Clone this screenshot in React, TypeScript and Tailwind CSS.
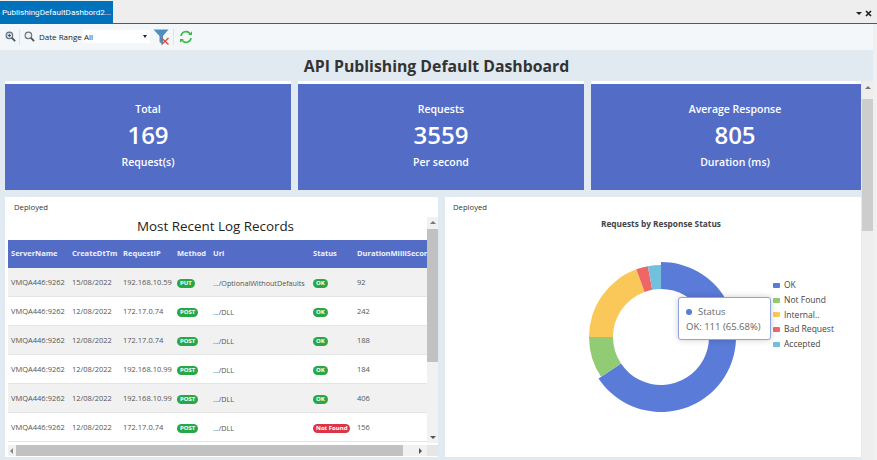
const rows = [
    { ip: '192.168.10.59', date: '15/08/2022', method: 'PUT', url: '.../OptionalWithoutDefaults', status: 'OK', ms: '92' },
    { ip: '172.17.0.74', date: '12/08/2022', method: 'POST', url: '.../DLL', status: 'OK', ms: '242' },
    { ip: '172.17.0.74', date: '12/08/2022', method: 'POST', url: '.../DLL', status: 'OK', ms: '188' },
    { ip: '192.168.10.99', date: '12/08/2022', method: 'POST', url: '.../DLL', status: 'OK', ms: '184' },
    { ip: '192.168.10.99', date: '12/08/2022', method: 'POST', url: '.../DLL', status: 'OK', ms: '406' },
    { ip: '172.17.0.74', date: '12/08/2022', method: 'POST', url: '.../DLL', status: 'Not Found', ms: '156' },
];

const legend = [
    { label: 'OK', color: 'bg-[#5b7bd8]' },
    { label: 'Not Found', color: 'bg-[#91cc75]' },
    { label: 'Internal..', color: 'bg-[#fac858]' },
    { label: 'Bad Request', color: 'bg-[#ee6666]' },
    { label: 'Accepted', color: 'bg-[#73c0de]' },
];

const cols = 'grid grid-cols-[61px_51px_54px_36px_100px_44px_70px] pl-[3px]';

function arc(cx: number, cy: number, r0: number, r1: number, from: number, to: number) {
    const p = (r: number, a: number) => {
        const t = (a * Math.PI) / 180;
        return `${(cx + r * Math.sin(t)).toFixed(2)} ${(cy - r * Math.cos(t)).toFixed(2)}`;
    };
    const large = to - from > 180 ? 1 : 0;
    return `M${p(r1, from)} A${r1} ${r1} 0 ${large} 1 ${p(r1, to)} L${p(r0, to)} A${r0} ${r0} 0 ${large} 0 ${p(r0, from)} Z`;
}

function Magnifier({ plus }: { plus?: boolean }) {
    return (
        <svg width="11" height="11" viewBox="0 0 12 12" fill="none">
            <circle cx="4.8" cy="4.8" r="3.6" fill={plus ? '#cfe3f5' : '#eef2f5'} stroke="#6a7278" strokeWidth="1.2" />
            <path d="M7.6 7.6 11 11" stroke="#4b5258" strokeWidth="2" />
            {plus ? <path d="M3 4.8h3.6M4.8 3v3.6" stroke="#2b5f96" strokeWidth="1.1" /> : null}
        </svg>
    );
}

function Card({ title, value, sub, className }: { title: string; value: string; sub: string; className: string }) {
    return (
        <div className={`flex h-[109px] flex-col border-t-[3px] border-white bg-[#536dc7] text-center text-white ${className}`}>
            <p className="mt-[17px] text-[10.5px] leading-[16px] font-semibold">{title}</p>
            <p className="mt-[2px] text-[24px] leading-[32px] font-semibold">{value}</p>
            <p className="mt-[3px] text-[10.5px] leading-[16px] font-semibold">{sub}</p>
        </div>
    );
}

function Pill({ text, red }: { text: string; red?: boolean }) {
    return (
        <span className={`block w-fit rounded-full px-[3px] text-[6px] leading-[9px] font-bold text-white ${red ? 'bg-[#dc3545]' : 'bg-[#28a745]'}`}>
            {text}
        </span>
    );
}

function Arrow({ dir, className = '' }: { dir: 'up' | 'down' | 'left' | 'right'; className?: string }) {
    const shape = {
        up: 'border-x-[3px] border-b-[3px] border-x-transparent border-b-[#777]',
        down: 'border-x-[3px] border-t-[3px] border-x-transparent border-t-[#555]',
        left: 'border-y-[3px] border-r-[3px] border-y-transparent border-r-[#888]',
        right: 'border-y-[3px] border-l-[3px] border-y-transparent border-l-[#555]',
    }[dir];
    return <span className={`block h-0 w-0 shrink-0 ${shape} ${className}`} />;
}

export default function App() {
    return (
        <div className="flex h-[460px] w-[877px] flex-col overflow-hidden bg-[#f0f0f0] font-['Open_Sans',sans-serif] text-[#333]">
            <div className="flex h-[24px] shrink-0 border-b border-[#0072bc] bg-[#eeeeee] pt-[1px]">
                <div className="flex w-[113px] items-center whitespace-nowrap bg-[#0072bc] pl-[2px] font-['Roboto',sans-serif] text-[8.1px] text-white">
                    PublishingDefaultDashbord2...
                </div>
                <div className="ml-auto flex items-center gap-[3px] pr-[5px] pt-[2px] text-[#222]">
                    <span className="h-0 w-0 border-x-[3px] border-t-[3px] border-x-transparent border-t-[#222]" />
                    <svg width="7" height="7" viewBox="0 0 7 7">
                        <path d="M1 1l5 5M6 1L1 6" stroke="#222" strokeWidth="1.7" />
                    </svg>
                </div>
            </div>

            <div className="flex h-[26px] w-[873px] shrink-0 items-center bg-[#f3f7fa] pb-[1px] text-[8px] text-[#222]">
                <div className="ml-[5px] flex w-[14px] items-center">
                    <Magnifier plus />
                </div>
                <div className="mr-[4px] h-[16px] w-px bg-[#dde3e8]" />
                <Magnifier />
                <span className="ml-[4px] w-[44px] whitespace-nowrap">Date Range</span>
                <div className="flex h-[13px] w-[67px] items-center justify-between bg-white pl-[1px] pr-[3px]">
                    All
                    <span className="h-0 w-0 border-x-[2.5px] border-t-[3px] border-x-transparent border-t-[#222]" />
                </div>
                <svg className="ml-[3px]" width="17" height="16" viewBox="0 0 17 16">
                    <path d="M0.5 0.5h15L10 7v8.5L6.5 13V7Z" fill="#4f8fc0" />
                    <path d="M8.5 9l7 6.5M15.5 9l-7 6.5" stroke="#d9503f" strokeWidth="1.4" />
                </svg>
                <div className="ml-[3px] mr-[5px] h-[16px] w-px bg-[#dde3e8]" />
                <svg width="14" height="14" viewBox="0 0 14 14" fill="none" stroke="#3dbb4a" strokeWidth="1.7">
                    <path d="M2 6a5 5 0 0 1 9-2.3" />
                    <path d="M12 8a5 5 0 0 1-9 2.3" />
                    <path d="M13 1.2v3.8H9.2z" fill="#3dbb4a" stroke="none" />
                    <path d="M1 12.8V9h3.8z" fill="#3dbb4a" stroke="none" />
                </svg>
            </div>

            <div className="flex min-h-0 w-[873px] flex-1">
                <main className="flex w-[862px] flex-col bg-[#e0eaf0] pl-[5px]">
                    <h1 className="h-[31px] pl-[6px] pt-[1px] text-center text-[15.8px] leading-[30px] font-bold text-[#333]">
                        API Publishing Default Dashboard
                    </h1>
                    <div className="flex gap-[7px]">
                        <Card className="w-[286px]" title="Total" value="169" sub="Request(s)" />
                        <Card className="w-[286px]" title="Requests" value="3559" sub="Per second" />
                        <Card className="w-[270px] pl-[18px]" title="Average Response" value="805" sub="Duration (ms)" />
                    </div>

                    <div className="mt-[7px] flex h-[260px] gap-[7px]">
                        <section className="flex w-[433px] flex-col bg-white pl-[3px]">
                            <p className="h-[20px] pl-[6px] pt-[3px] text-[7.7px] leading-[14px]">Deployed</p>
                            <div className="flex min-h-0">
                                <div className="w-[419px] overflow-hidden">
                                    <h2 className="h-[23px] pr-[4px] text-center text-[13.4px] leading-[18px] font-medium text-[#222]">
                                        Most Recent Log Records
                                    </h2>
                                    <div className={`${cols} h-[28px] items-center whitespace-nowrap bg-[#536dc7] text-[7.5px] font-bold text-[#eef1fb]`}>
                                        <span>ServerName</span>
                                        <span>CreateDtTm</span>
                                        <span>RequestIP</span>
                                        <span>Method</span>
                                        <span>Url</span>
                                        <span>Status</span>
                                        <span>DurationMilliSecon</span>
                                    </div>
                                    {rows.map((row, i) => (
                                        <div
                                            key={i}
                                            className={`${cols} h-[29px] items-center whitespace-nowrap border-b border-[#e4e4e4] pt-[2px] text-[7.5px] text-[#555] ${i % 2 === 0 ? 'bg-[#f1f1f1]' : 'bg-white'}`}
                                        >
                                            <span>VMQA446:9262</span>
                                            <span>{row.date}</span>
                                            <span>{row.ip}</span>
                                            <Pill text={row.method} />
                                            <span className="text-[7.2px]">{row.url}</span>
                                            <Pill text={row.status} red={row.status !== 'OK'} />
                                            <span>{row.ms}</span>
                                        </div>
                                    ))}
                                </div>
                                <div className="flex h-[226px] w-[11px] flex-col items-center bg-[#f1f1f1]">
                                    <Arrow dir="up" className="mt-[4px]" />
                                    <div className="mt-[5px] h-[133px] w-full bg-[#c1c1c1]" />
                                    <Arrow dir="down" className="mb-[4px] mt-auto" />
                                </div>
                            </div>
                            <div className="mt-[2px] flex h-[11px] w-[430px] shrink-0 items-center bg-[#f1f1f1]">
                                <Arrow dir="left" className="ml-[2px]" />
                                <div className="ml-[3px] h-full w-[387px] bg-[#c1c1c1]" />
                                <Arrow dir="right" className="ml-[16px]" />
                                <div className="ml-auto h-full w-[11px] bg-[#e6e6e6]" />
                            </div>
                        </section>

                        <section className="relative w-[416px] bg-white">
                            <p className="pl-[8px] pt-[3px] text-[7.7px] leading-[14px]">Deployed</p>
                            <p className="mt-[3px] pl-[16px] text-center text-[8.3px] leading-[14px] font-bold text-[#444]">
                                Requests by Response Status
                            </p>
                            <div className="mt-[29px] flex items-start pl-[139px]">
                                <svg className="block h-[154px] w-[154px] shrink-0" viewBox="0 0 154 154">
                                    <path d={arc(77, 77, 48, 75, 0, 236.4)} fill="#5b7bd8" />
                                    <path d={arc(77, 77, 48, 72, 236.4, 270)} fill="#91cc75" />
                                    <path d={arc(77, 77, 48, 72, 270, 340)} fill="#fac858" />
                                    <path d={arc(77, 77, 48, 72, 340, 349.5)} fill="#ee6666" />
                                    <path d={arc(77, 77, 48, 72, 349.5, 360)} fill="#73c0de" />
                                </svg>
                                <ul className="ml-[35px] mt-[18px] flex flex-col">
                                    {legend.map((item) => (
                                        <li key={item.label} className="flex h-[14.75px] items-center gap-[4px] text-[8.5px] text-[#444]">
                                            <span className={`h-[5px] w-[7px] rounded-[1px] ${item.color}`} />
                                            {item.label}
                                        </li>
                                    ))}
                                </ul>
                            </div>
                            <div className="absolute left-[233px] top-[100px] h-[43px] w-[93px] rounded-[3px] border border-[#8fa3e0] bg-white px-[7px] pt-[6px] text-[9.5px] leading-[15px] text-[#666] shadow-[0_0_6px_rgba(0,0,0,0.2)]">
                                <div className="flex items-center gap-[6px]">
                                    <span className="size-[6px] rounded-full bg-[#5b7bd8]" />
                                    Status
                                </div>
                                <div className="whitespace-nowrap">OK: 111 (65.68%)</div>
                            </div>
                        </section>
                    </div>
                </main>

                <div className="flex w-[11px] flex-col items-center bg-[#eeeeee]">
                    <div className="h-[31px] w-full bg-[#e0eaf0]" />
                    <Arrow dir="up" className="mt-[5px]" />
                    <div className="mt-[10px] h-[132px] w-full bg-[#cdcdcd]" />
                </div>
            </div>
        </div>
    );
}
